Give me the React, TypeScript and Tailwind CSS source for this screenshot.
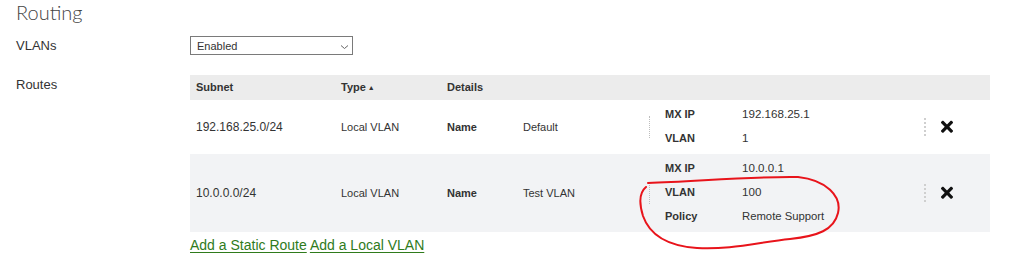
import React from "react";
import { FaTimes } from "react-icons/fa";

type Detail = { label: string; value: string };
type Route = { subnet: string; type: string; name: string; details: Detail[]; bg: string; h: string };

const routes: Route[] = [
  {
    subnet: "192.168.25.0/24",
    type: "Local VLAN",
    name: "Default",
    details: [
      { label: "MX IP", value: "192.168.25.1" },
      { label: "VLAN", value: "1" },
    ],
    bg: "bg-white",
    h: "h-[54px]",
  },
  {
    subnet: "10.0.0.0/24",
    type: "Local VLAN",
    name: "Test VLAN",
    details: [
      { label: "MX IP", value: "10.0.0.1" },
      { label: "VLAN", value: "100" },
      { label: "Policy", value: "Remote Support" },
    ],
    bg: "bg-[#f2f3f5]",
    h: "h-[78px]",
  },
];

function Handle() {
  return (
    <div className="flex flex-col gap-[2px]">
      <div className="w-[2px] h-[2px] bg-[#cfcfcf]" />
      <div className="w-[2px] h-[2px] bg-[#cfcfcf]" />
      <div className="w-[2px] h-[2px] bg-[#cfcfcf]" />
      <div className="w-[2px] h-[2px] bg-[#cfcfcf]" />
      <div className="w-[2px] h-[2px] bg-[#cfcfcf]" />
    </div>
  );
}

export default function App() {
  return (
    <div className="relative w-[1009px] h-[269px] bg-white text-[#333] font-['Liberation_Sans',Arial,sans-serif] overflow-hidden">
      <h1 className="pl-4 text-[20px] leading-[24px] font-light font-['Lato','Liberation_Sans',sans-serif] text-[#444]">
        Routing
      </h1>

      <div className="flex items-center mt-[12px] h-[19px]">
        <div className="w-[190px] pl-4 text-[13px] leading-[19px]">VLANs</div>
        <div className="w-[163px] h-[19px] border border-[#7a7a7a] bg-white flex items-center justify-between pl-[6px] pr-[3px]">
          <span className="text-[11px] leading-[14px]">Enabled</span>
          <svg width="9" height="6" viewBox="0 0 9 6" className="mt-[3px]">
            <path d="M1 1.5 L4.5 4.5 L8 1.5" fill="none" stroke="#666" strokeWidth="1" />
          </svg>
        </div>
      </div>

      <div className="flex mt-[20px]">
        <div className="w-[190px] pl-4 text-[13px] leading-[20px]">Routes</div>
        <div className="w-[800px]">
          <div className="grid grid-cols-[145px_106px_1fr] items-center h-[25px] bg-[#ececec] pl-[6px] text-[11px] font-bold">
            <div>Subnet</div>
            <div className="flex items-center gap-[2px]">
              Type <span className="text-[7px] leading-none">▲</span>
            </div>
            <div>Details</div>
          </div>

          {routes.map((r) => (
            <div
              key={r.subnet}
              className={`grid grid-cols-[145px_106px_76px_126px_275px_1fr] items-center pl-[6px] ${r.bg} ${r.h}`}
            >
              <div className="text-[12px]">{r.subnet}</div>
              <div className="text-[11px]">{r.type}</div>
              <div className="text-[11px] font-bold">Name</div>
              <div className="text-[11px]">{r.name}</div>
              <div className="flex items-center">
                <div className="h-[22px] border-l border-dotted border-[#bdbdbd]" />
                <div className="grid grid-cols-[77px_1fr] pl-[15px] -mt-[2px]">
                  {r.details.map((d) => (
                    <React.Fragment key={d.label}>
                      <div className="text-[11px] font-bold leading-[24px]">{d.label}</div>
                      <div
                        className={`leading-[24px] ${
                          d.label === "Policy" ? "text-[11.3px]" : "text-[11.6px]"
                        }`}
                      >
                        {d.value}
                      </div>
                    </React.Fragment>
                  ))}
                </div>
              </div>
              <div className="flex items-center gap-[15px]">
                <Handle />
                <FaTimes className="w-[12px] h-[17.5px] text-[#111]" />
              </div>
            </div>
          ))}

          <div className="mt-[5px] leading-[16px] text-[14px] text-[#2f7b1c]">
            <a href="#" className="underline underline-offset-[2px]">Add a Static Route</a>{" "}
            <a href="#" className="underline underline-offset-[2px]">Add a Local VLAN</a>
          </div>
        </div>
      </div>

      <svg
        className="absolute inset-0 pointer-events-none"
        width="1009"
        height="269"
        viewBox="0 0 1009 269"
      >
        <path
          d="M648,183 C700,181 760,176 798,177 C826,180 842,196 838,213 C834,230 818,236 790,239 C760,242 730,250 697,248 C668,246 650,236 643,216 C638,200 640,192 646,187"
          fill="none"
          stroke="#e8141b"
          strokeWidth="2"
          strokeLinecap="round"
        />
      </svg>
    </div>
  );
}
